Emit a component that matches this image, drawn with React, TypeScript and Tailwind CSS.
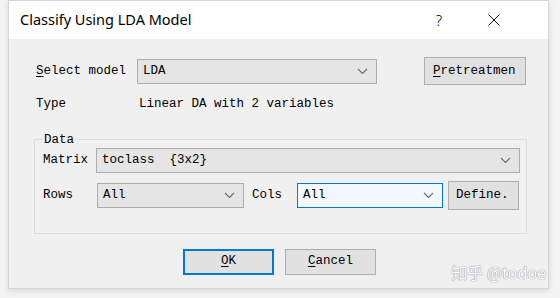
import React from "react";

const mono = "font-['Liberation_Mono',monospace] text-[12.5px] text-black";

const Chevron = () => (
    <svg width="11" height="7" viewBox="0 0 11 7" className="shrink-0">
        <path d="M1 1 L5.5 5.5 L10 1" fill="none" stroke="#6b6b6b" strokeWidth="1.1" />
    </svg>
);

const Combo = ({
    value,
    className,
    focused = false,
}: {
    value: string;
    className: string;
    focused?: boolean;
}) => (
    <div
        className={`${className} flex items-center justify-between pl-[5px] pr-[8px] border ${
            focused ? "border-[#0078d7] bg-[#f2f8fd]" : "border-[#adadad] bg-[#e5e5e5]"
        }`}
    >
        <span className={`${mono} whitespace-pre`}>{value}</span>
        <Chevron />
    </div>
);

const Button = ({
    children,
    className,
    primary = false,
}: {
    children: React.ReactNode;
    className: string;
    primary?: boolean;
}) => (
    <div
        className={`${className} flex items-center justify-center bg-[#e1e1e1] ${mono} ${
            primary ? "border-2 border-[#0078d7]" : "border border-[#adadad]"
        }`}
    >
        {children}
    </div>
);

export default function App() {
    return (
        <div className="w-[560px] h-[298px] bg-[#f4f4f4] pl-[8px] overflow-hidden">
            <div className="w-[541px] h-[289px] border border-[#d6d6d6] flex flex-col shadow-[0_2px_6px_rgba(0,0,0,0.12)]">
                {/* title bar */}
                <div className="h-[38px] bg-white flex items-center pl-[11px] pr-[48px] font-['Noto_Sans',sans-serif] text-black">
                    <span className="text-[14.5px]">Classify Using LDA Model</span>
                    <span className="ml-auto text-[15px] font-light">?</span>
                    <svg width="12" height="12" viewBox="0 0 12 12" className="ml-[46px]">
                        <path d="M0.5 0.5 L11.5 11.5 M11.5 0.5 L0.5 11.5" stroke="#111" strokeWidth="1" />
                    </svg>
                </div>

                {/* body */}
                <div className="flex-1 bg-[#f0f0f0] relative pl-[25px] pt-[18px]">
                    <div className="flex items-center">
                        <span className={`${mono} w-[103px] pl-[2px]`}>
                            <u className="underline-offset-2">S</u>elect model
                        </span>
                        <Combo value="LDA" className="w-[240px] h-[25px]" />
                        <Button className="ml-[47px] w-[102px] h-[28px] justify-start pl-[8px]">
                            <span>
                                <u className="underline-offset-2">P</u>retreatmen
                            </span>
                        </Button>
                    </div>

                    <div className="flex items-center mt-[10px]">
                        <span className={`${mono} w-[103px] pl-[2px]`}>Type</span>
                        <span className={`${mono} pl-[2px]`}>Linear DA with 2 variables</span>
                    </div>

                    <fieldset className="mt-[19px] w-[493px] h-[101px] border border-[#dcdcdc] pl-[8px]">
                        <legend className={`${mono} px-[1px] leading-[14px]`}>Data</legend>
                        <div className="flex items-center mt-[1px]">
                            <span className={`${mono} w-[53px]`}>Matrix</span>
                            <Combo value="toclass  {3x2}" className="w-[424px] h-[25px]" />
                        </div>
                        <div className="flex items-center mt-[8px]">
                            <span className={`${mono} w-[54px]`}>Rows</span>
                            <Combo value="All" className="w-[147px] h-[25px]" />
                            <span className={`${mono} ml-[8px] w-[45px]`}>Cols</span>
                            <Combo value="All" className="w-[146px] h-[25px]" focused />
                            <Button className="ml-[5px] w-[71px] h-[29px] justify-start pl-[7px]">
                                Define.
                            </Button>
                        </div>
                    </fieldset>

                    <div className="flex mt-[15px] ml-[149px] gap-[11px]">
                        <Button className="w-[91px] h-[26px]" primary>
                            <span>
                                <u className="underline-offset-2">O</u>K
                            </span>
                        </Button>
                        <Button className="w-[91px] h-[26px]">
                            <span>
                                <u className="underline-offset-2">C</u>ancel
                            </span>
                        </Button>
                    </div>

                    <span className="absolute right-[2px] bottom-[4px] font-['Noto_Sans_CJK_SC',sans-serif] text-[16px] text-white [text-shadow:0_0_1px_#8a8a8a,0_0_1px_#8a8a8a]">
                        知乎 @todoe
                    </span>
                </div>
            </div>
        </div>
    );
}
